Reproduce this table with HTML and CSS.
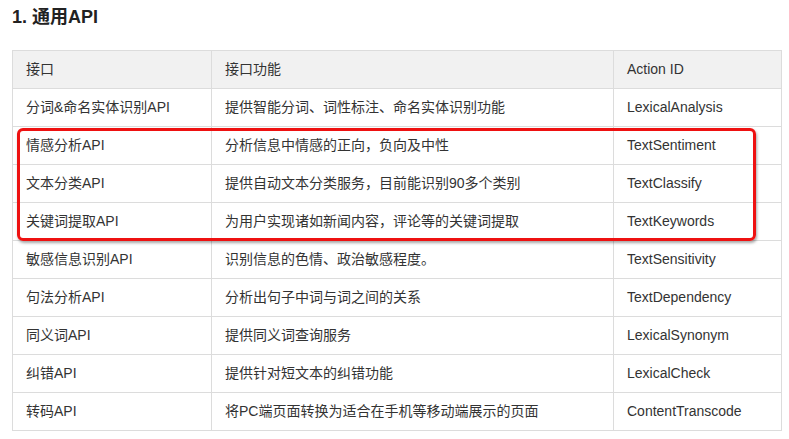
FILE: index.html
```html
<!DOCTYPE html>
<html>
<head>
<meta charset="utf-8">
<link rel="stylesheet" href="styles.css">
</head>
<body>
<div class="page">
  <h3 class="title">1. 通用API</h3>
  <div class="table-wrap">
    <table class="api-table">
      <thead>
        <tr><th class="c1">接口</th><th class="c2">接口功能</th><th class="c3">Action ID</th></tr>
      </thead>
      <tbody>
        <tr><td>分词&amp;命名实体识别API</td><td>提供智能分词、词性标注、命名实体识别功能</td><td>LexicalAnalysis</td></tr>
        <tr><td>情感分析API</td><td>分析信息中情感的正向，负向及中性</td><td>TextSentiment</td></tr>
        <tr><td>文本分类API</td><td>提供自动文本分类服务，目前能识别90多个类别</td><td>TextClassify</td></tr>
        <tr><td>关键词提取API</td><td>为用户实现诸如新闻内容，评论等的关键词提取</td><td>TextKeywords</td></tr>
        <tr><td>敏感信息识别API</td><td>识别信息的色情、政治敏感程度。</td><td>TextSensitivity</td></tr>
        <tr><td>句法分析API</td><td>分析出句子中词与词之间的关系</td><td>TextDependency</td></tr>
        <tr><td>同义词API</td><td>提供同义词查询服务</td><td>LexicalSynonym</td></tr>
        <tr><td>纠错API</td><td>提供针对短文本的纠错功能</td><td>LexicalCheck</td></tr>
        <tr><td>转码API</td><td>将PC端页面转换为适合在手机等移动端展示的页面</td><td>ContentTranscode</td></tr>
      </tbody>
    </table>
    <div class="highlight"></div>
  </div>
</div>
</body>
</html>
```
FILE: styles.css
```css
html, body {
  margin: 0;
  padding: 0;
  background: #ffffff;
}
body {
  font-family: "Liberation Sans", "Noto Sans CJK SC", Arial, sans-serif;
  color: #333333;
}
.page {
  padding: 0 0 0 12px;
  width: 769px;
}
.title {
  margin: 0;
  padding-top: 6px;
  height: 50px;
  box-sizing: border-box;
  font-size: 18px;
  font-weight: bold;
  color: #222222;
  line-height: 22px;
}
.table-wrap {
  position: relative;
}
.api-table {
  border-collapse: collapse;
  width: 769px;
  font-size: 14px;
  line-height: 16px;
  table-layout: fixed;
}
.api-table th,
.api-table td {
  border: 1px solid #dcdcdc;
  height: 38px;
  padding: 0 0 1px 13px;
  text-align: left;
  vertical-align: middle;
  font-weight: normal;
  color: #333333;
  box-sizing: border-box;
  white-space: nowrap;
}
.api-table thead th {
  background: #f1f1f1;
}
.c1 { width: 199px; }
.c2 { width: 402px; }
.c3 { width: 168px; }
.highlight {
  position: absolute;
  left: 5px;
  top: 78px;
  width: 739px;
  height: 113px;
  box-sizing: border-box;
  border: 3px solid #ee1111;
  border-radius: 6px;
  box-shadow: 1px 2px 3px rgba(0, 0, 0, 0.35);
  pointer-events: none;
}
```
